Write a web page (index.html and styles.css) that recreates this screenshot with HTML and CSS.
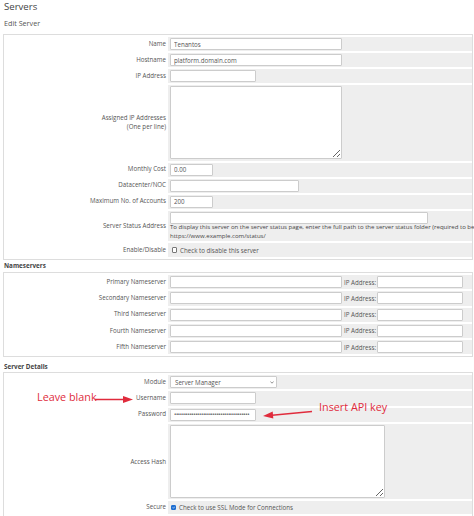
FILE: index.html
```html
<!DOCTYPE html>
<html lang="en">
<head>
<meta charset="utf-8">
<title>Servers - Edit Server</title>
<link rel="stylesheet" href="styles.css">
</head>
<body>
<div class="page">
  <h1 class="title">Servers</h1>
  <h2 class="subtitle">Edit Server</h2>

  <table class="form form-main">
    <tr><td class="lbl">Name</td><td class="fld"><input class="inp w172" type="text" value="Tenantos"></td></tr>
    <tr><td class="lbl">Hostname</td><td class="fld"><input class="inp w172" type="text" value="platform.domain.com"></td></tr>
    <tr><td class="lbl">IP Address</td><td class="fld"><input class="inp w86" type="text"></td></tr>
    <tr class="ta-row"><td class="lbl">Assigned IP Addresses<br>(One per line)</td><td class="fld"><textarea class="ta w172"></textarea></td></tr>
    <tr><td class="lbl">Monthly Cost</td><td class="fld"><input class="inp w43" type="text" value="0.00"></td></tr>
    <tr><td class="lbl">Datacenter/NOC</td><td class="fld"><input class="inp w129" type="text"></td></tr>
    <tr><td class="lbl">Maximum No. of Accounts</td><td class="fld"><input class="inp w43" type="text" value="200"></td></tr>
    <tr class="status-row"><td class="lbl">Server Status Address</td><td class="fld"><input class="inp w258" type="text"><div class="help">To display this server on the server status page, enter the full path to the server status folder (required to be<br>https://www.example.com/status/</div></td></tr>
    <tr><td class="lbl">Enable/Disable</td><td class="fld"><label class="check"><span class="cb"></span>Check to disable this server</label></td></tr>
  </table>

  <h3 class="section section-ns">Nameservers</h3>
  <table class="form form-ns">
    <tr><td class="lbl">Primary Nameserver</td><td class="fld"><div class="ns"><input class="inp w172" type="text"><span class="ip-lbl">IP Address:</span><input class="inp w86" type="text"></div></td></tr>
    <tr><td class="lbl">Secondary Nameserver</td><td class="fld"><div class="ns"><input class="inp w172" type="text"><span class="ip-lbl">IP Address:</span><input class="inp w86" type="text"></div></td></tr>
    <tr><td class="lbl">Third Nameserver</td><td class="fld"><div class="ns"><input class="inp w172" type="text"><span class="ip-lbl">IP Address:</span><input class="inp w86" type="text"></div></td></tr>
    <tr><td class="lbl">Fourth Nameserver</td><td class="fld"><div class="ns"><input class="inp w172" type="text"><span class="ip-lbl">IP Address:</span><input class="inp w86" type="text"></div></td></tr>
    <tr><td class="lbl">Fifth Nameserver</td><td class="fld"><div class="ns"><input class="inp w172" type="text"><span class="ip-lbl">IP Address:</span><input class="inp w86" type="text"></div></td></tr>
  </table>

  <h3 class="section section-sd">Server Details</h3>
  <table class="form form-sd">
    <tr><td class="lbl">Module</td><td class="fld"><span class="sel w107"><select class="inp"><option>Server Manager</option></select><svg class="chev" width="4" height="3" viewBox="0 0 4 3"><polyline points="0.4,0.5 2,2.2 3.6,0.5" fill="none" stroke="#666" stroke-width="0.7"/></svg></span></td></tr>
    <tr><td class="lbl">Username</td><td class="fld"><input class="inp w86" type="text"></td></tr>
    <tr><td class="lbl">Password</td><td class="fld"><input class="inp w86 pw" type="password" value="abcdefghijabcdefghijabcdefghijabcdefghi"></td></tr>
    <tr class="ta-row2"><td class="lbl">Access Hash</td><td class="fld"><textarea class="ta w215"></textarea></td></tr>
    <tr class="secure-row"><td class="lbl">Secure</td><td class="fld"><label class="check"><span class="cb on"><svg width="5" height="5" viewBox="0 0 5 5"><polyline points="1,2.6 2,3.6 4,1.3" fill="none" stroke="#fff" stroke-width="0.9"/></svg></span>Check to use SSL Mode for Connections</label></td></tr>
  </table>

  <div class="note note-left">Leave blank</div>
  <div class="note note-right">Insert API key</div>
  <svg class="arrows" width="474" height="516" viewBox="0 0 474 516">
    <line x1="95" y1="399.6" x2="125" y2="399.4" stroke="#e02b3c" stroke-width="1.5"/>
    <polygon points="133,399.4 123,395.9 123,402.9" fill="#e02b3c"/>
    <line x1="312" y1="411.5" x2="272" y2="415.2" stroke="#e02b3c" stroke-width="1.5"/>
    <polygon points="263,416 273.3,418.6 272.7,411.6" fill="#e02b3c"/>
  </svg>
</div>
</body>
</html>
```

FILE: styles.css
```css
html, body {
  margin: 0;
  padding: 0;
  background: #fff;
  overflow: hidden;
}

body {
  font-family: "Open Sans", "Liberation Sans", sans-serif;
  font-size: 6.2px;
  color: #555;
}

.page {
  position: relative;
  width: 474px;
  height: 516px;
  padding-left: 3px;
  box-sizing: border-box;
}

.title {
  margin: 0;
  padding: 1px 0 0 1px;
  font-size: 9.6px;
  line-height: 12px;
  font-weight: 400;
  color: #444;
}

.subtitle {
  margin: 6px 0 6px;
  padding-left: 1px;
  font-size: 7.2px;
  line-height: 9px;
  font-weight: 400;
  color: #555;
}

.section {
  padding-left: 1px;
  font-size: 6.3px;
  line-height: 9px;
  font-weight: 700;
  color: #444;
}

.section-ns {
  margin: 0.5px 0 2.5px;
}

.section-sd {
  margin: 4.25px 0 1.5px;
}

.form {
  width: 470px;
  border: 1px solid #ddd;
  border-spacing: 0 2px;
  border-collapse: separate;
  table-layout: fixed;
  background: #fff;
}

.form td {
  padding: 0;
  height: 14px;
  vertical-align: middle;
}

.form-ns td {
  height: 14.25px;
}

.form-sd td {
  height: 14.25px;
}

.form-sd .secure-row td {
  height: 13px;
}

.form td.lbl {
  width: 162px;
  padding-right: 2px;
  text-align: right;
  color: #555;
  line-height: 8.5px;
}

.form td.fld {
  background: #eee;
  padding-left: 2px;
}

.ta-row td {
  padding-top: 1px;
  padding-bottom: 1.5px;
}

.ta-row2 td {
  padding-top: 1.5px;
  padding-bottom: 0.5px;
}

.status-row td.fld {
  padding-top: 1px;
}

.inp {
  display: block;
  box-sizing: border-box;
  height: 12px;
  margin: 0;
  padding: 0 3px;
  border: 1px solid #ccc;
  border-radius: 1px;
  background: #fff;
  font-family: "Open Sans", "Liberation Sans", sans-serif;
  font-size: 6.2px;
  color: #555;
  outline: none;
}

.pw {
  letter-spacing: -0.4px;
  padding-left: 3px;
  color: #666;
}

.ta {
  display: block;
  box-sizing: border-box;
  height: 73px;
  margin: 0;
  padding: 2px;
  border: 1px solid #ccc;
  border-radius: 1px;
  background: #fff;
  font-family: "Open Sans", "Liberation Sans", sans-serif;
  font-size: 6.2px;
}

.w43 { width: 43px; }
.w86 { width: 86px; }
.w107 { width: 107px; }
.w129 { width: 129px; }
.w172 { width: 172px; }
.w215 { width: 215px; }
.w258 { width: 258px; }

.help {
  margin-top: -0.5px;
  white-space: nowrap;
  font-size: 6.05px;
  line-height: 9px;
  color: #444;
}

.check {
  display: flex;
  align-items: center;
  color: #555;
}

.cb {
  display: inline-flex;
  align-items: center;
  justify-content: center;
  box-sizing: border-box;
  width: 5.5px;
  height: 5.5px;
  margin: 0 3px 0 1.5px;
  border: 0.6px solid #777;
  border-radius: 1px;
  background: #fff;
}

.cb.on {
  margin-left: 0.5px;
  border-color: #1f6fd1;
  background: #1f6fd1;
}

.ns {
  display: flex;
  align-items: center;
}

.ip-lbl {
  margin: 0 1px 0 2px;
  color: #555;
}

.sel {
  position: relative;
  display: block;
}

.sel select {
  width: 100%;
  appearance: none;
  -webkit-appearance: none;
  padding-left: 4px;
  color: #555;
}

.chev {
  position: absolute;
  right: 3px;
  top: 4.5px;
}

.note {
  position: absolute;
  font-size: 10.8px;
  line-height: 12px;
  color: #e02b3c;
  white-space: nowrap;
}

.note-left {
  left: 37px;
  top: 391.3px;
}

.note-right {
  left: 319px;
  top: 400.8px;
}

.arrows {
  position: absolute;
  left: 0;
  top: 0;
  pointer-events: none;
}
```
